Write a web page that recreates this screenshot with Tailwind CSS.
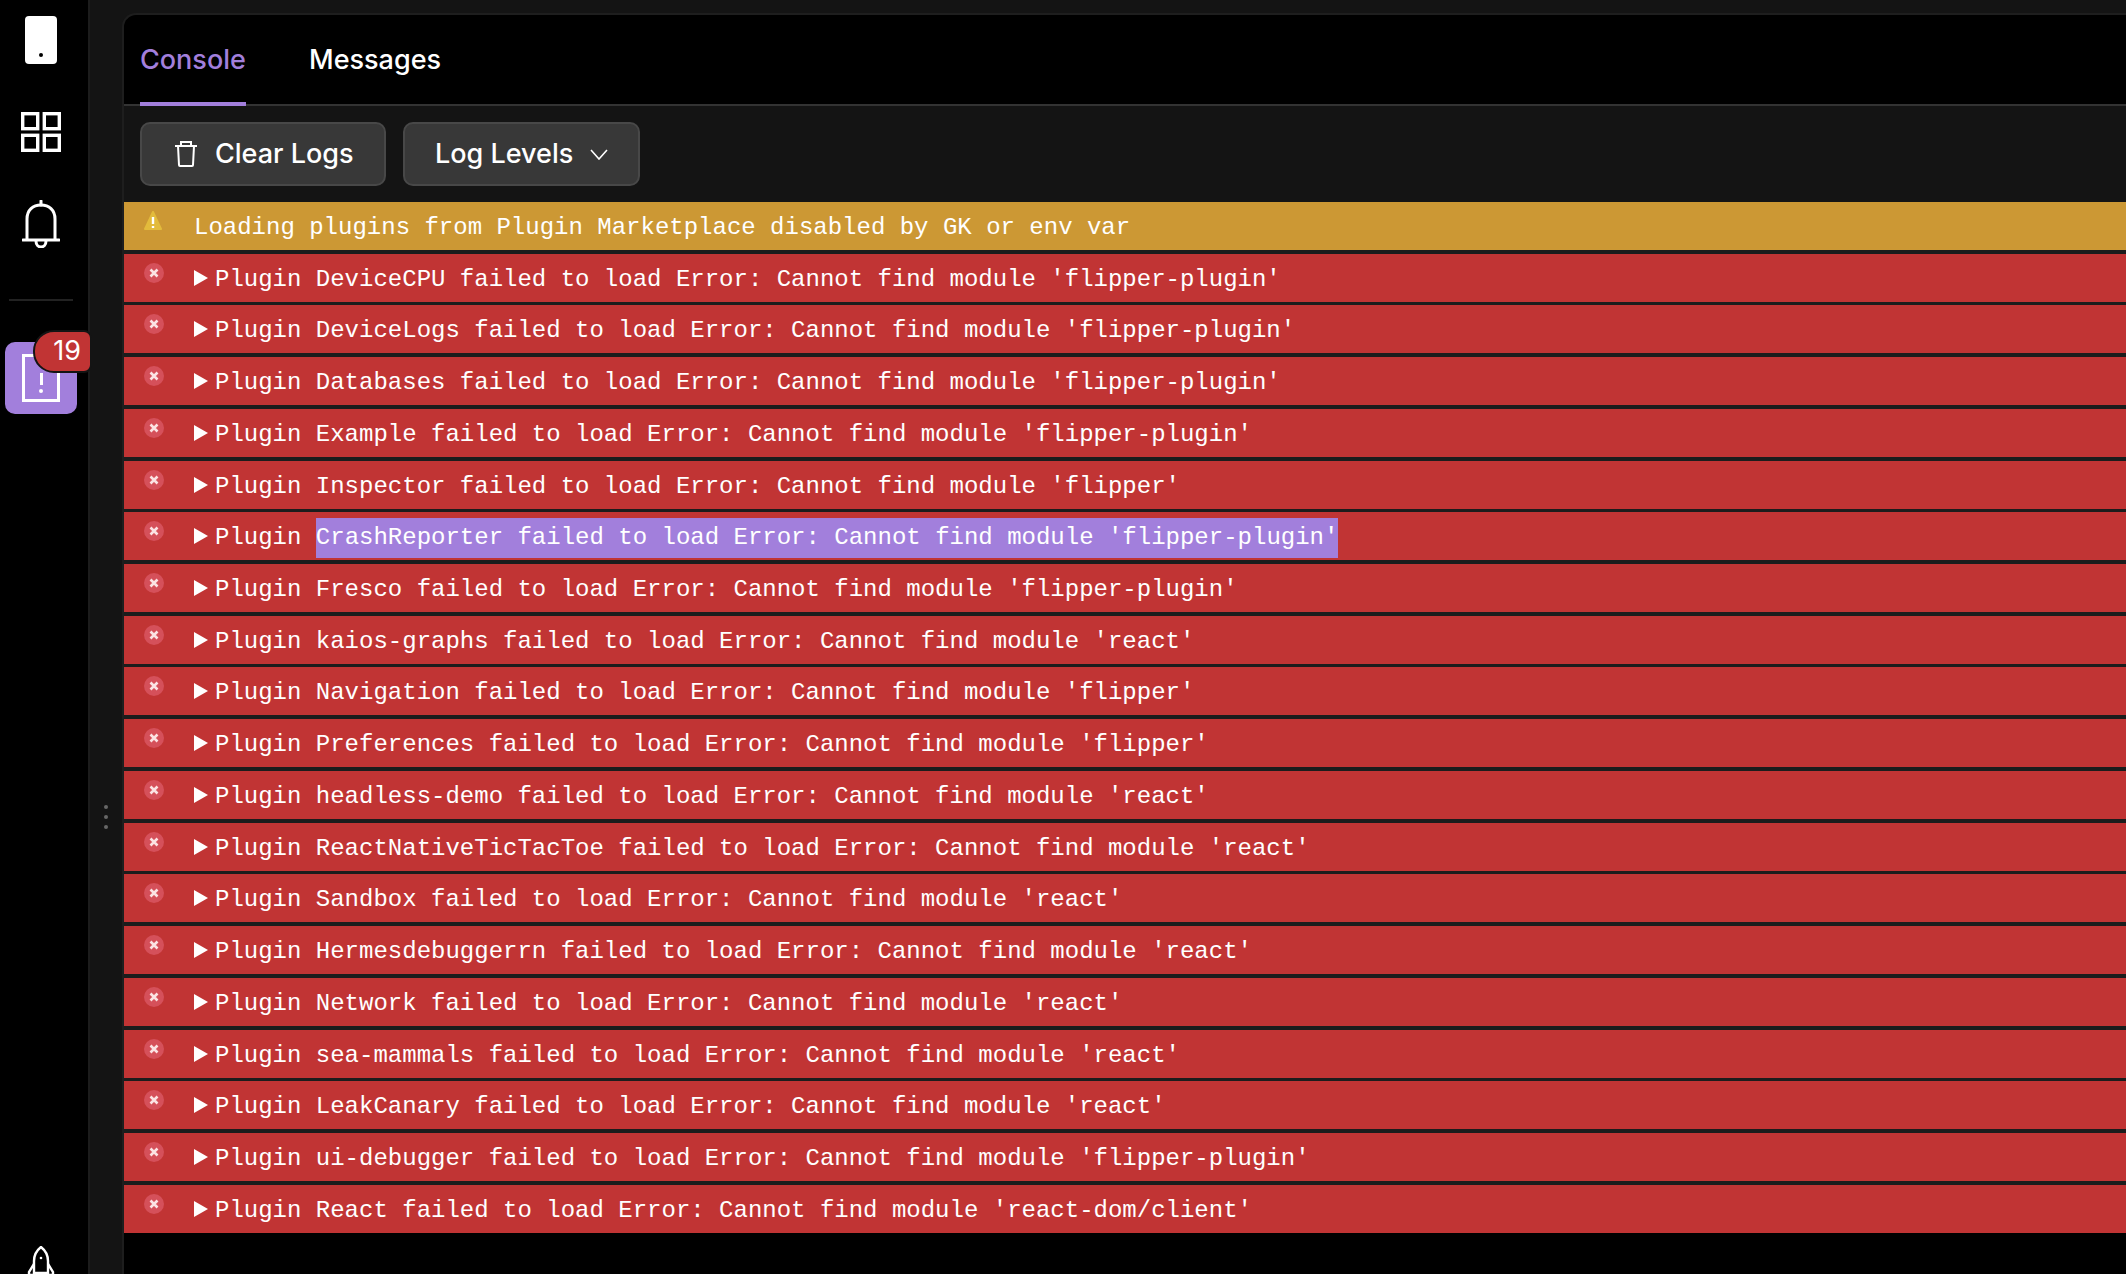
<!DOCTYPE html>
<html lang="en">
<head>
    <meta charset="UTF-8">
    <title>Flipper Logs</title>
    <script src="https://cdn.jsdelivr.net/npm/@tailwindcss/browser@4"></script>
</head>
<body class="bg-black">
<div class="flex h-[1274px] w-[2126px] overflow-hidden font-['Inter',sans-serif] text-white">

    <!-- Left rail -->
    <aside class="relative flex h-full w-[90px] shrink-0 flex-col items-center border-r-2 border-[#1c1c1c] bg-black pr-[6px]">
        <div class="mt-[16px] flex h-[48px] w-[32px] items-end justify-center rounded-[4px] bg-white pb-[7px]">
            <div class="h-[4px] w-[4px] rounded-full bg-black"></div>
        </div>
        <svg class="mt-[48px] h-[40px] w-[40px]" viewBox="0 0 40 40" fill="none" stroke="white" stroke-width="3.4">
            <rect x="1.7" y="1.7" width="15" height="15"/><rect x="23.3" y="1.7" width="15" height="15"/>
            <rect x="1.7" y="23.3" width="15" height="15"/><rect x="23.3" y="23.3" width="15" height="15"/>
        </svg>
        <svg class="mt-[48px] h-[48px] w-[38px]" viewBox="0 0 38 48" fill="none" stroke="white" stroke-width="3">
            <path d="M5 39V19C5 10 11 5 19 5s14 5 14 14v20"/>
            <path d="M1 40h36" stroke-linecap="round"/>
            <path d="M14 41c0 8 10 8 10 0"/>
            <path d="M19 1v4" stroke-linecap="round"/>
        </svg>
        <div class="mt-[51px] h-[2px] w-[64px] bg-[#222]"></div>
        <div class="mt-[41px] flex h-[72px] w-[72px] items-center justify-center rounded-[10px] bg-[#a27fdc]">
            <div class="flex h-[48px] w-[38px] flex-col items-center justify-end border-[3px] border-white pb-[6px]">
                <div class="h-[12px] w-[3px] bg-white"></div>
                <div class="mt-[4px] h-[4px] w-[4px] rounded-full bg-white"></div>
            </div>
        </div>
        <div class="absolute top-[330px] left-[33px] flex h-[43px] w-[59px] items-center justify-end overflow-hidden rounded-l-[21px] rounded-r-[8px] border-2 border-[#141414] bg-[#c13434] pr-[9px] text-[27px]">19</div>
        <svg class="mt-auto mb-[-10px] h-[38px] w-[28px]" viewBox="0 0 28 38" fill="none" stroke="white" stroke-width="2.4">
            <path d="M14 1c5 4 7 9 7 14v12H7V15C7 10 9 5 14 1z"/>
            <path d="M7 18l-5 8v3h5M21 18l5 8v3h-5"/>
            <circle cx="14" cy="12" r="1.3" fill="white" stroke="none"/>
        </svg>
    </aside>

    <!-- Resize gutter -->
    <div class="flex h-full w-[32px] shrink-0 flex-col items-center justify-center gap-[6px] bg-[#141414] pt-[360px]">
        <div class="h-[4px] w-[4px] rounded-full bg-[#666]"></div>
        <div class="h-[4px] w-[4px] rounded-full bg-[#666]"></div>
        <div class="h-[4px] w-[4px] rounded-full bg-[#666]"></div>
    </div>

    <!-- Main panel -->
    <div class="flex min-w-0 flex-1 flex-col bg-[#141414] pt-[13px]">
        <main class="flex min-h-0 flex-1 flex-col rounded-tl-[14px] border-t-2 border-l-2 border-[#1e1e1e] bg-black">
            <div class="flex h-[91px] shrink-0 items-stretch gap-[63px] border-b-2 border-[#333] pt-[2px] pl-[16px] text-[27px] font-medium">
                <div class="relative flex w-[106px] items-center text-[#a27fdc]">
                    Console
                    <div class="absolute right-0 bottom-[-2px] left-0 h-[4px] bg-[#a27fdc]"></div>
                </div>
                <div class="flex items-center">Messages</div>
            </div>
            <div class="flex h-[96px] shrink-0 items-start gap-[17px] bg-[#141414] pt-[16px] pl-[16px] text-[27px] font-medium">
                <button class="flex h-[64px] w-[246px] items-center rounded-[10px] border-2 border-[#484848] bg-[#383838] pl-[32px]">
                    <svg class="mr-[17px] h-[26px] w-[24px]" viewBox="0 0 24 26" fill="none" stroke="white" stroke-width="2">
                        <path d="M1 5h22M7 5V1h10v4M4 5l1 19a1 1 0 0 0 1 1h12a1 1 0 0 0 1-1l1-19"/>
                    </svg>
                    Clear Logs
                </button>
                <button class="flex h-[64px] w-[237px] items-center rounded-[10px] border-2 border-[#484848] bg-[#383838] pl-[30px]">
                    Log Levels
                    <svg class="ml-[17px] h-[11px] w-[18px]" viewBox="0 0 18 11" fill="none" stroke="white" stroke-width="1.6">
                        <path d="M1 1l8 9 8-9"/>
                    </svg>
                </button>
            </div>

            <div id="logs" class="flex flex-col bg-[#1c1c1c] font-['Liberation_Mono',monospace] text-[24px]">
                <div class="relative flex h-[48px] items-center bg-[#cc9834] pt-[4px] pl-[70px]">
                    <svg class="absolute top-[9px] left-[19px] h-[20px] w-[20px]" viewBox="0 0 20 20">
                        <path d="M10 1l8 17H2z" fill="#e3bb3c" stroke="#e3bb3c" stroke-width="2" stroke-linejoin="round"/>
                        <path d="M10 6v7M10 15v2" stroke="white" stroke-width="2.4"/>
                    </svg>
                    Loading plugins from Plugin Marketplace disabled by GK or env var
                </div>
            </div>
            <div class="flex-1 bg-black"></div>
        </main>
    </div>
</div>

<script>
    // One row per plugin that failed to load
    const rows = [
        ["DeviceCPU", "flipper-plugin"],
        ["DeviceLogs", "flipper-plugin"],
        ["Databases", "flipper-plugin"],
        ["Example", "flipper-plugin"],
        ["Inspector", "flipper"],
        ["CrashReporter", "flipper-plugin"],
        ["Fresco", "flipper-plugin"],
        ["kaios-graphs", "react"],
        ["Navigation", "flipper"],
        ["Preferences", "flipper"],
        ["headless-demo", "react"],
        ["ReactNativeTicTacToe", "react"],
        ["Sandbox", "react"],
        ["Hermesdebuggerrn", "react"],
        ["Network", "react"],
        ["sea-mammals", "react"],
        ["LeakCanary", "react"],
        ["ui-debugger", "flipper-plugin"],
        ["React", "react-dom/client"]
    ];

    const logs = document.getElementById('logs');
    rows.forEach(function(row) {
        const message = `${row[0]} failed to load Error: Cannot find module '${row[1]}'`;
        const text = row[0] === "CrashReporter"
            ? `<span class="inline-block bg-[#a27fdc] leading-[40px]">${message}</span>`
            : message;
        logs.insertAdjacentHTML('beforeend', `
            <div class="relative mt-[3.72px] flex h-[48px] items-center whitespace-pre bg-[#c13434] pt-[4px] pl-[91px]">
                <svg class="absolute top-[9px] left-[20px] h-[20px] w-[20px]" viewBox="0 0 20 20">
                    <circle cx="10" cy="10" r="10" fill="#d5505a"/>
                    <path d="M6.5 6.5l7 7M13.5 6.5l-7 7" stroke="#fbe3e4" stroke-width="2.6"/>
                </svg>
                <svg class="absolute top-[16px] left-[70px] h-[16px] w-[14px]" viewBox="0 0 14 16">
                    <path d="M0 0l14 8L0 16z" fill="white"/>
                </svg>
                <span>Plugin ${text}</span>
            </div>`);
    });
</script>
</body>
</html>
